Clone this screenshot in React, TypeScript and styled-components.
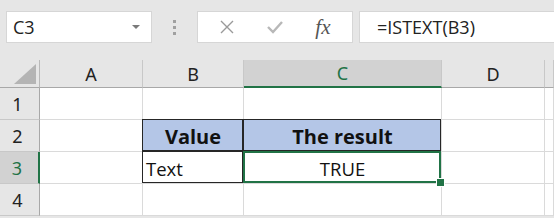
import { Fragment } from "react";
import styled, { createGlobalStyle } from "styled-components";

const GlobalStyle = createGlobalStyle`
  * { box-sizing: border-box; }
  html, body { margin: 0; padding: 0; background: #e6e6e6; }
`;

const Page = styled.div`
  width: 554px;
  height: 218px;
  overflow: hidden;
  background: #e6e6e6;
  font-family: "Open Sans", "Noto Sans", sans-serif;
`;

const Toolbar = styled.div`
  height: 60px;
  display: flex;
  align-items: flex-start;
  padding: 11px 0 0 6px;
`;

const NameBox = styled.div`
  width: 146px;
  height: 32px;
  background: #fff;
  border: 1px solid #d6d6d6;
  display: flex;
  align-items: center;
  justify-content: space-between;
  padding: 0 11px 0 6px;
  font-size: 18px;
  color: #222;
`;

const Caret = styled.span`
  width: 0;
  height: 0;
  border-left: 4px solid transparent;
  border-right: 4px solid transparent;
  border-top: 4px solid #7a7a7a;
`;

const Dots = styled.div`
  width: 45px;
  height: 32px;
  display: flex;
  flex-direction: column;
  align-items: center;
  justify-content: center;
  gap: 3px;

  span {
    width: 3px;
    height: 3px;
    background: #a0a0a0;
  }
`;

const ButtonBox = styled.div`
  width: 156px;
  height: 32px;
  background: #fff;
  border: 1px solid #d6d6d6;
  display: flex;
  align-items: center;
  justify-content: space-around;
  padding: 0 6px;
`;

const Fx = styled.span`
  font-family: "Liberation Serif", "DejaVu Serif", serif;
  font-style: italic;
  font-size: 21px;
  color: #555;
`;

const FormulaInput = styled.div`
  flex: 1;
  margin-left: 6px;
  height: 32px;
  background: #fff;
  border: 1px solid #d6d6d6;
  border-right: none;
  display: flex;
  align-items: center;
  padding-left: 17px;
  font-size: 18px;
  color: #222;
`;

const Sheet = styled.div`
  display: grid;
  grid-template-columns: 40px 103px 101px 198px 103px 1fr;
  grid-template-rows: 28px repeat(4, 32px);
  background: #fff;
`;

const Corner = styled.div`
  background: #e6e6e6;
  border-right: 1px solid #b9b9b9;
  border-bottom: 1px solid #a8a8a8;
  display: flex;
  align-items: flex-end;
  justify-content: flex-end;
  padding: 0 3px 3px 0;
`;

const ColHead = styled.div<{ $active?: boolean }>`
  background: ${(p) => (p.$active ? "#d2d2d2" : "#e6e6e6")};
  color: ${(p) => (p.$active ? "#217346" : "#222")};
  border-right: 1px solid #c8c8c8;
  border-bottom: ${(p) => (p.$active ? "2px solid #217346" : "1px solid #a8a8a8")};
  display: flex;
  align-items: center;
  justify-content: center;
  font-family: "Noto Sans", "Open Sans", sans-serif;
  font-size: 18px;
`;

const RowHead = styled.div<{ $active?: boolean }>`
  background: ${(p) => (p.$active ? "#d2d2d2" : "#e6e6e6")};
  color: ${(p) => (p.$active ? "#217346" : "#222")};
  border-right: ${(p) => (p.$active ? "2px solid #217346" : "1px solid #a8a8a8")};
  border-bottom: 1px solid #c8c8c8;
  display: flex;
  align-items: center;
  justify-content: center;
  padding-right: 4px;
  font-family: "Noto Sans", "Open Sans", sans-serif;
  font-size: 18px;
`;

const Cell = styled.div<{
  $fill?: string;
  $bold?: boolean;
  $align?: string;
  $boxed?: boolean;
  $selected?: boolean;
}>`
  position: relative;
  background: ${(p) => p.$fill || "#fff"};
  border-right: 1px solid #dadada;
  border-bottom: 1px solid #dadada;
  display: flex;
  align-items: center;
  justify-content: ${(p) => p.$align || "flex-start"};
  padding: 2px 3px 0;
  font-size: ${(p) => (p.$bold ? "20px" : "18.5px")};
  font-weight: ${(p) => (p.$bold ? 700 : 400)};
  color: #111;

  &::after {
    content: "";
    display: ${(p) => (p.$boxed || p.$selected ? "block" : "none")};
    position: absolute;
    top: -1px;
    left: -1px;
    right: 0;
    bottom: 0;
    border: ${(p) => (p.$selected ? "2px solid #217346" : "1px solid #262626")};
    z-index: 1;
  }

  &::before {
    content: "";
    display: ${(p) => (p.$selected ? "block" : "none")};
    position: absolute;
    right: -4px;
    bottom: -4px;
    width: 7px;
    height: 7px;
    background: #217346;
    border: 1px solid #fff;
    z-index: 2;
  }
`;

const columns = ["A", "B", "C", "D", ""];

type CellData = {
  text?: string;
  fill?: string;
  bold?: boolean;
  align?: string;
  boxed?: boolean;
  selected?: boolean;
};

const rows: CellData[][] = [
  [{}, {}, {}, {}, {}],
  [
    {},
    { text: "Value", fill: "#b4c6e7", bold: true, align: "center", boxed: true },
    { text: "The result", fill: "#b4c6e7", bold: true, align: "center", boxed: true },
    {},
    {},
  ],
  [
    {},
    { text: "Text", boxed: true },
    { text: "TRUE", align: "center", selected: true },
    {},
    {},
  ],
  [{}, {}, {}, {}, {}],
];

export default function App() {
  return (
    <Page>
      <GlobalStyle />
      <Toolbar>
        <NameBox>
          C3
          <Caret />
        </NameBox>
        <Dots>
          <span />
          <span />
          <span />
        </Dots>
        <ButtonBox>
          <svg width="16" height="16" viewBox="0 0 16 16">
            <path d="M2 2 L14 14 M14 2 L2 14" stroke="#9a9a9a" strokeWidth="1.4" fill="none" />
          </svg>
          <svg width="18" height="14" viewBox="0 0 18 14">
            <path d="M2 7 L7 12 L16 2" stroke="#b8b8b8" strokeWidth="2.4" fill="none" />
          </svg>
          <Fx>fx</Fx>
        </ButtonBox>
        <FormulaInput>=ISTEXT(B3)</FormulaInput>
      </Toolbar>
      <Sheet>
        <Corner>
          <svg width="22" height="20" viewBox="0 0 22 20">
            <polygon points="22,0 22,20 0,20" fill="#b4b4b4" />
          </svg>
        </Corner>
        {columns.map((c) => (
          <ColHead key={c || "e"} $active={c === "C"}>
            {c}
          </ColHead>
        ))}
        {rows.map((row, ri) => (
          <Fragment key={`r${ri}`}>
            <RowHead $active={ri === 2}>{ri + 1}</RowHead>
            {row.map((cell, ci) => (
              <Cell
                key={`${ri}-${ci}`}
                $fill={cell.fill}
                $bold={cell.bold}
                $align={cell.align}
                $boxed={cell.boxed}
                $selected={cell.selected}
              >
                {cell.text}
              </Cell>
            ))}
          </Fragment>
        ))}
      </Sheet>
    </Page>
  );
}
